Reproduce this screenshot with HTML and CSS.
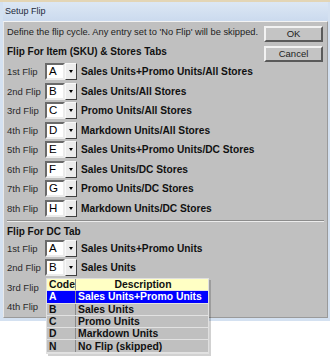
FILE: index.html
```html
<!DOCTYPE html>
<html>
<head>
<meta charset="utf-8">
<link rel="stylesheet" href="styles.css">
</head>
<body>
<div class="page">
<div class="window">
  <div class="titlebar">Setup Flip</div>
  <div class="client">
    <div class="top">
      <div class="top-left">
        <div class="intro">Define the flip cycle. Any entry set to 'No Flip' will be skipped.</div>
        <div class="heading">Flip For Item (SKU) &amp; Stores Tabs</div>
      </div>
      <div class="buttons">
        <div class="btn">OK</div>
        <div class="btn">Cancel</div>
      </div>
    </div>
    <div class="rows">
      <div class="row"><span class="label">1st Flip</span><span class="combo"><span class="val">A</span><span class="arrow"></span></span><span class="desc">Sales Units+Promo Units/All Stores</span></div>
      <div class="row"><span class="label">2nd Flip</span><span class="combo"><span class="val">B</span><span class="arrow"></span></span><span class="desc">Sales Units/All Stores</span></div>
      <div class="row"><span class="label">3rd Flip</span><span class="combo"><span class="val">C</span><span class="arrow"></span></span><span class="desc">Promo Units/All Stores</span></div>
      <div class="row"><span class="label">4th Flip</span><span class="combo"><span class="val">D</span><span class="arrow"></span></span><span class="desc">Markdown Units/All Stores</span></div>
      <div class="row"><span class="label">5th Flip</span><span class="combo"><span class="val">E</span><span class="arrow"></span></span><span class="desc">Sales Units+Promo Units/DC Stores</span></div>
      <div class="row"><span class="label">6th Flip</span><span class="combo"><span class="val">F</span><span class="arrow"></span></span><span class="desc">Sales Units/DC Stores</span></div>
      <div class="row"><span class="label">7th Flip</span><span class="combo"><span class="val">G</span><span class="arrow"></span></span><span class="desc">Promo Units/DC Stores</span></div>
      <div class="row"><span class="label">8th Flip</span><span class="combo"><span class="val">H</span><span class="arrow"></span></span><span class="desc">Markdown Units/DC Stores</span></div>
    </div>
    <div class="sep"></div>
    <div class="heading dc">Flip For DC Tab</div>
    <div class="rows">
      <div class="row"><span class="label">1st Flip</span><span class="combo"><span class="val">A</span><span class="arrow"></span></span><span class="desc">Sales Units+Promo Units</span></div>
      <div class="row"><span class="label">2nd Flip</span><span class="combo"><span class="val">B</span><span class="arrow"></span></span><span class="desc">Sales Units</span></div>
      <div class="row"><span class="label">3rd Flip</span></div>
      <div class="row"><span class="label">4th Flip</span></div>
    </div>
    <div class="popup">
      <table class="list">
        <tr class="head"><td class="code">Code</td><td class="descr">Description</td></tr>
        <tr class="sel"><td class="code">A</td><td>Sales Units+Promo Units</td></tr>
        <tr><td class="code">B</td><td>Sales Units</td></tr>
        <tr><td class="code">C</td><td>Promo Units</td></tr>
        <tr><td class="code">D</td><td>Markdown Units</td></tr>
        <tr><td class="code">N</td><td>No Flip (skipped)</td></tr>
      </table>
    </div>
  </div>
</div>
</div>
</body>
</html>
```
FILE: styles.css
```css
html, body {
  margin: 0;
  padding: 0;
  background: #ffffff;
}
body {
  font-family: "Liberation Sans", Arial, sans-serif;
  color: #111;
}
.page {
  width: 330px;
  height: 357px;
  overflow: hidden;
}
.window {
  width: 330px;
  height: 321px;
  box-sizing: border-box;
  border-top: 2px solid #e3d5b5;
  background: #d4e1f1;
  padding: 0 2px 3px 3px;
  display: flex;
  flex-direction: column;
}
.titlebar {
  height: 19px;
  flex: none;
  font-size: 9px;
  line-height: 19px;
  padding-left: 2px;
  color: #1e2a3a;
  background: linear-gradient(#dce7f4, #cbdaee);
}
.client {
  position: relative;
  flex: 1;
  background: #c0c0c0;
  border-top: 1px solid #f4f4f4;
  border-left: 1px solid #e8e8e8;
  border-right: 1px solid #9a9a9a;
  border-bottom: 1px solid #9a9a9a;
  padding: 3px 0 0 3px;
}
.top {
  display: flex;
  justify-content: space-between;
}
.intro {
  font-size: 9.3px;
  line-height: 14px;
  color: #222;
}
.heading {
  font-size: 10px;
  font-weight: bold;
  line-height: 14px;
  margin-top: 6px;
  color: #111;
}
.heading.dc {
  margin-top: 3px;
}
.buttons {
  display: flex;
  flex-direction: column;
  gap: 4px;
  margin-top: 1px;
  margin-right: 4px;
}
.btn {
  width: 55px;
  height: 12px;
  font-size: 9.5px;
  line-height: 12px;
  text-align: center;
  color: #222;
  background: #c4c4c4;
  border: 2px solid;
  border-color: #f2f2f2 #5a5a5a #5a5a5a #f2f2f2;
}
.rows {
  display: flex;
  flex-direction: column;
}
.row {
  display: flex;
  align-items: center;
  height: 19.5px;
}
.label {
  width: 38px;
  font-size: 9.5px;
  color: #2a2a2a;
}
.combo {
  display: flex;
  height: 17px;
}
.val {
  width: 14px;
  height: 13px;
  background: #fff;
  border: 2px solid;
  border-color: #6a6a6a #ececec #ececec #6a6a6a;
  font-size: 11.5px;
  line-height: 13px;
  padding-left: 2px;
  color: #000;
}
.arrow {
  position: relative;
  width: 10px;
  height: 15px;
  background: #ececec;
  border: 1px solid;
  border-color: #f8f8f8 #404040 #404040 #f8f8f8;
}
.arrow::after {
  content: "";
  position: absolute;
  left: 3px;
  top: 6px;
  border-left: 2px solid transparent;
  border-right: 2px solid transparent;
  border-top: 3px solid #000;
}
.desc {
  margin-left: 4px;
  font-size: 10.2px;
  font-weight: bold;
  color: #111;
}
.sep {
  margin: 1.5px 3px 0 0;
  height: 0;
  border-top: 1px solid #8c8c8c;
  border-bottom: 1px solid #ececec;
}
.popup {
  position: absolute;
  left: 42px;
  top: 256px;
  width: 161px;
  border: 1px solid #e0e0e0;
  box-shadow: 2px 2px 0 rgba(0, 0, 0, 0.18);
  background: #c0c0c0;
  z-index: 5;
}
.list {
  width: 100%;
  border-collapse: collapse;
  font-size: 10.4px;
  font-weight: bold;
  color: #111;
}
.list td {
  height: 11.3px;
  padding: 0 0 0 2px;
  line-height: 11px;
  border-bottom: 1px solid #e2e2e2;
  white-space: nowrap;
}
.list td.code {
  width: 26px;
  border-right: 1px solid #8a8a8a;
}
.list tr.head td {
  background: #ffffc4;
}
.list tr.head td.descr {
  text-align: center;
}
.list tr.sel td {
  background: #0000ff;
  color: #fff;
}
```
